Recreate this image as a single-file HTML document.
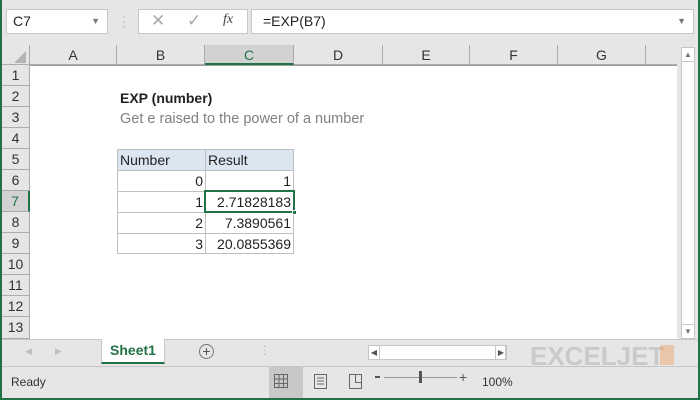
<!DOCTYPE html>
<html><head><style>
*{margin:0;padding:0;box-sizing:border-box}
body{width:700px;height:400px;overflow:hidden;background:#e6e6e6;font-family:"Liberation Sans",sans-serif;position:relative;font-size:13px;color:#222}
.a{position:absolute}
.ch{position:absolute;top:45px;height:20px;border-right:1px solid #ababab;border-bottom:1px solid #ababab;text-align:center;line-height:21px;font-size:14px;color:#333;background:#e6e6e6}
.rh{position:absolute;left:2px;width:28px;height:21px;border-bottom:1px solid #ababab;border-right:1px solid #ababab;text-align:center;line-height:21px;font-size:14px;color:#333;background:#e6e6e6}
.cell{position:absolute;font-size:14px;line-height:21px;height:21px}
</style></head><body>
<div class="a" style="left:0;top:0;width:2px;height:400px;background:#217346"></div>
<div class="a" style="right:0;top:0;width:2px;height:400px;background:#217346"></div>
<div class="a" style="left:0;bottom:0;width:700px;height:2px;background:#217346"></div>
<div class="a" style="left:6px;top:9px;width:102px;height:25px;background:#fff;border:1px solid #c6c6c6;padding-left:6px;line-height:23px;font-size:14px">C7<span style="position:absolute;right:7px;top:0;font-size:9px;color:#777">▼</span></div>
<div class="a" style="left:122px;top:14px;color:#aaa;font-size:12px;line-height:5px">·<br>·<br>·</div>
<div class="a" style="left:138px;top:9px;width:110px;height:25px;background:#fff;border:1px solid #c6c6c6"></div>
<div class="a" style="left:151px;top:11px;color:#aaa;font-size:17px">✕</div>
<div class="a" style="left:187px;top:11px;color:#aaa;font-size:17px">✓</div>
<div class="a" style="left:223px;top:12px;color:#444;font-size:14px;font-style:italic;font-family:'Liberation Serif',serif">fx</div>
<div class="a" style="left:251px;top:9px;width:443px;height:25px;background:#fff;border:1px solid #c6c6c6;padding-left:11px;line-height:23px;font-size:14px">=EXP(B7)<span style="position:absolute;right:7px;top:0;font-size:9px;color:#777">▼</span></div>
<div class="a" style="left:30px;top:65px;width:647px;height:274px;background:#fff"></div>
<div class="a" style="left:2px;top:45px;width:28px;height:20px;border-right:1px solid #ababab;border-bottom:1px solid #ababab"></div>
<div class="a" style="left:14px;top:51px;width:0;height:0;border-left:12px solid transparent;border-bottom:12px solid #b5b5b5"></div>
<div class="ch" style="left:30px;width:87px">A</div>
<div class="ch" style="left:117px;width:88px">B</div>
<div class="ch" style="left:205px;width:89px;background:#d2d2d2;color:#217346;border-bottom:2px solid #217346">C</div>
<div class="ch" style="left:294px;width:89px">D</div>
<div class="ch" style="left:383px;width:87px">E</div>
<div class="ch" style="left:470px;width:88px">F</div>
<div class="ch" style="left:558px;width:88px">G</div>
<div class="ch" style="left:646px;width:31px;border-right:none"></div>
<div class="rh" style="top:65px">1</div><div class="rh" style="top:86px">2</div><div class="rh" style="top:107px">3</div><div class="rh" style="top:128px">4</div><div class="rh" style="top:149px">5</div><div class="rh" style="top:170px">6</div><div class="rh" style="top:191px;background:#d2d2d2;color:#217346;border-right:2px solid #217346">7</div><div class="rh" style="top:212px">8</div><div class="rh" style="top:233px">9</div><div class="rh" style="top:254px">10</div><div class="rh" style="top:275px">11</div><div class="rh" style="top:296px">12</div><div class="rh" style="top:317px;height:22px">13</div>
<div class="a" style="left:30px;top:65px;width:647px;height:1px;background:#9c9c9c"></div>
<div class="cell" style="left:120px;top:88px;font-weight:bold">EXP (number)</div>
<div class="cell" style="left:120px;top:109px;color:#808080;font-size:14.5px">Get e raised to the power of a number</div>
<div class="a" style="left:117px;top:149px;width:177px;height:105px;border:1px solid #bfbfbf;background:#fff"></div>
<div class="a" style="left:118px;top:150px;width:175px;height:20px;background:#dce6f1"></div>
<div class="a" style="left:205px;top:149px;width:1px;height:105px;background:#bfbfbf"></div>
<div class="a" style="left:117px;top:170px;width:177px;height:1px;background:#bfbfbf"></div>
<div class="a" style="left:117px;top:191px;width:177px;height:1px;background:#bfbfbf"></div>
<div class="a" style="left:117px;top:212px;width:177px;height:1px;background:#bfbfbf"></div>
<div class="a" style="left:117px;top:233px;width:177px;height:1px;background:#bfbfbf"></div>
<div class="cell" style="left:120px;top:150px">Number</div>
<div class="cell" style="left:208px;top:150px">Result</div>
<div class="cell" style="left:117px;width:86px;text-align:right;top:171px">0</div>
<div class="cell" style="left:117px;width:86px;text-align:right;top:192px">1</div>
<div class="cell" style="left:117px;width:86px;text-align:right;top:213px">2</div>
<div class="cell" style="left:117px;width:86px;text-align:right;top:234px">3</div>
<div class="cell" style="left:205px;width:86px;text-align:right;top:171px">1</div>
<div class="cell" style="left:205px;width:86px;text-align:right;top:192px">2.71828183</div>
<div class="cell" style="left:205px;width:86px;text-align:right;top:213px">7.3890561</div>
<div class="cell" style="left:205px;width:86px;text-align:right;top:234px">20.0855369</div>
<div class="a" style="left:204px;top:190px;width:91px;height:23px;border:2px solid #217346"></div>
<div class="a" style="left:292px;top:210px;width:5px;height:5px;background:#217346;border:1px solid #fff"></div>
<div class="a" style="left:681px;top:47px;width:14px;height:292px;background:#fff;border:1px solid #c6c6c6"></div>
<div class="a" style="left:681px;top:47px;width:14px;height:15px;border:1px solid #c6c6c6;font-size:8px;text-align:center;color:#777;line-height:13px">▲</div>
<div class="a" style="left:681px;top:324px;width:14px;height:15px;border:1px solid #c6c6c6;font-size:8px;text-align:center;color:#777;line-height:13px">▼</div>
<div class="a" style="left:2px;top:339px;width:696px;height:1px;background:#c6c6c6"></div>
<div class="a" style="left:25px;top:346px;color:#c0c0c0;font-size:9px">◀</div>
<div class="a" style="left:55px;top:346px;color:#c0c0c0;font-size:9px">▶</div>
<div class="a" style="left:101px;top:339px;width:64px;height:25px;background:#fff;border-left:1px solid #c6c6c6;border-right:1px solid #c6c6c6;border-bottom:2px solid #217346;text-align:center;font-weight:bold;color:#217346;font-size:14px;line-height:22px">Sheet1</div>
<div class="a" style="left:199px;top:344px;width:15px;height:15px;border:1px solid #777;border-radius:50%;text-align:center;line-height:13px;font-size:14px;color:#555">+</div>
<div class="a" style="left:263px;top:345px;color:#aaa;font-size:10px;line-height:4px">·<br>·<br>·</div>
<div class="a" style="left:368px;top:345px;width:138px;height:15px;background:#fff;border:1px solid #c6c6c6"></div>
<div class="a" style="left:368px;top:345px;width:12px;height:15px;border:1px solid #c6c6c6;font-size:8px;color:#555;line-height:13px;text-align:center">◀</div>
<div class="a" style="left:495px;top:345px;width:12px;height:15px;border:1px solid #c6c6c6;font-size:8px;color:#555;line-height:13px;text-align:center">▶</div>
<div class="a" style="left:530px;top:341px;font-size:26px;font-weight:bold;color:rgba(150,150,150,0.35)">EXCELJET</div>
<div class="a" style="left:660px;top:345px;width:14px;height:20px;background:rgba(240,150,80,0.4)"></div>
<div class="a" style="left:2px;top:366px;width:696px;height:1px;background:#c6c6c6"></div>
<div class="a" style="left:11px;top:375px;font-size:12px;color:#333">Ready</div>
<div class="a" style="left:269px;top:367px;width:34px;height:31px;background:#c8c8c8"></div>
<svg class="a" style="left:274px;top:374px" width="120" height="20" viewBox="0 0 120 20"><g fill="none" stroke="#666" stroke-width="1"><rect x="0.5" y="0.5" width="13" height="13"/><path d="M5 0.5V13.5M9.5 0.5V13.5M0.5 5H13.5M0.5 9.5H13.5"/><rect x="40.5" y="0.5" width="12" height="14"/><path d="M43 4H50M43 7H50M43 10H50"/><rect x="75.5" y="0.5" width="12" height="14"/><path d="M81.5 0.5V8.5H87.5"/></g></svg>
<div class="a" style="left:375px;top:376px;width:5px;height:2px;background:#555"></div>
<div class="a" style="left:384px;top:377px;width:73px;height:1px;background:#999"></div>
<div class="a" style="left:419px;top:371px;width:3px;height:12px;background:#555"></div>
<div class="a" style="left:459px;top:369px;font-size:14px;color:#555">+</div>
<div class="a" style="left:482px;top:375px;font-size:12px;color:#333">100%</div>
</body></html>
